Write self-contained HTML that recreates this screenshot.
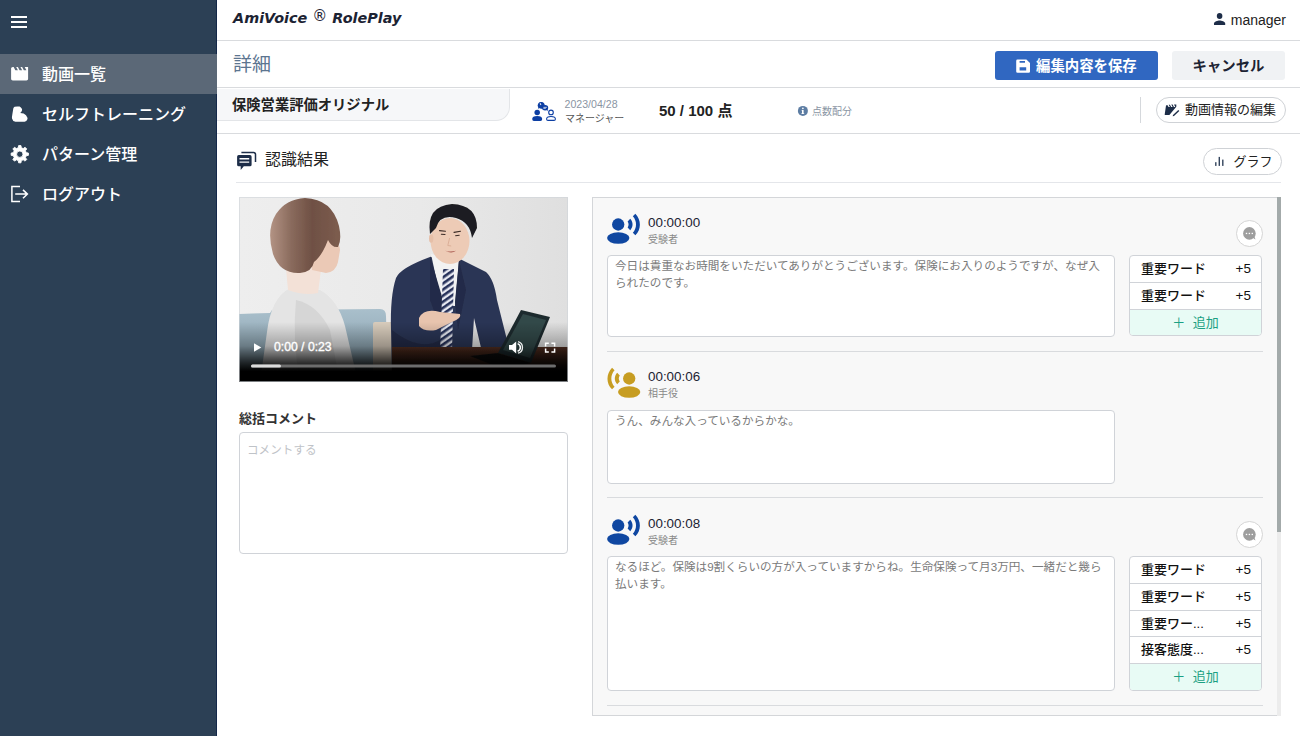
<!DOCTYPE html>
<html lang="ja">
<head>
<meta charset="utf-8">
<title>AmiVoice RolePlay</title>
<style>
*{box-sizing:border-box;margin:0;padding:0}
html,body{width:1300px;height:736px;overflow:hidden;background:#fff}
body{font-family:"Liberation Sans","Noto Sans CJK JP",sans-serif;color:#222;font-size:14px;position:relative}
.abs{position:absolute;z-index:2}
/* sidebar */
#side{position:absolute;left:0;top:0;width:217px;height:736px;background:#2c4055;border-right:1px solid #14284a}
#side .ham{position:absolute;left:11px;top:16px;width:16px;height:12px}
#side .ham i{position:absolute;left:0;width:16px;height:2px;background:#fff}
#side .item{position:absolute;left:0;width:217px;height:40px;color:#fff;font-size:16px;line-height:40px;padding-left:42px;padding-top:1px;white-space:nowrap;font-weight:500}
#side .item.act{background:#5b6877}
#side .item svg.ic{position:absolute;left:0;top:0}
/* top */
#top{position:absolute;left:217px;top:0;width:1083px;height:41px;background:#fff;border-bottom:1px solid #d9dbde;box-shadow:0 1px 2px rgba(0,0,0,.08)}
#logo{position:absolute;left:16px;top:9px;font-family:"DejaVu Sans","Liberation Sans",sans-serif;font-weight:700;font-style:italic;font-size:14.4px;color:#1c2333;white-space:nowrap;letter-spacing:0}
#user{position:absolute;right:14px;top:10px;font-size:14px;color:#222;white-space:nowrap;line-height:20px}
#sub{position:absolute;left:217px;top:41px;width:1083px;height:47px;background:#fff;border-bottom:1px solid #d9dbde}
#sub h1{position:absolute;left:16px;top:9px;font-size:19px;font-weight:400;color:#5c7590;line-height:30px}
.btn{position:absolute;height:29px;border-radius:3px;font-size:14.4px;font-weight:700;line-height:29px;padding-top:1px;text-align:center;white-space:nowrap}
#save{left:778px;top:10px;width:163px;background:#3067c1;color:#fff;text-align:left;padding-left:41px}
#cancel{left:955px;top:10px;width:113px;background:#f0f2f4;color:#1c2333}
#info{position:absolute;left:217px;top:89px;width:1083px;height:45px;background:#fff;border-bottom:1px solid #d9dbde}
#tab{position:absolute;left:0;top:0;width:293px;height:32px;background:#f6f7f9;border:1px solid #e3e5e8;border-left:0;border-top:0;border-radius:0 0 14px 0;font-weight:700;font-size:14.3px;line-height:32px;padding-left:15px;color:#222;white-space:nowrap}

#info .ic1{position:absolute;left:315px;top:11px}
#info .date{position:absolute;left:347.5px;top:9px;font-size:10.6px;line-height:12px;color:#8a95a3;white-space:nowrap}
#info .role{position:absolute;left:348px;top:23px;font-size:10px;line-height:13px;color:#555;white-space:nowrap}
#info .score{position:absolute;left:442px;top:12px;font-size:15px;font-weight:700;line-height:20px;color:#222;white-space:nowrap}
#info .haibun{position:absolute;left:595px;top:16px;font-size:10px;line-height:13px;color:#8a95a3;white-space:nowrap}
#info .vline{position:absolute;left:923px;top:8px;width:1px;height:26px;background:#d5d8dc}
.pill{position:absolute;border:1px solid #cfd2d6;border-radius:14px;background:#fff;font-size:14px;color:#222;white-space:nowrap}
#edit{left:939px;top:8px;width:130px;height:26px;line-height:24px;padding-left:28px;font-size:13px}
#sec{position:absolute;left:217px;top:134px;width:1083px;height:602px;background:#fff}
#sec h2{position:absolute;left:48px;top:14px;font-size:16px;font-weight:400;line-height:24px;color:#222}
#graph{left:986px;top:14px;width:79px;height:27px;line-height:25px;padding-left:29.5px;font-size:13px}
#sec .hr{position:absolute;left:19px;top:48px;width:1045px;height:1px;background:#e4e6ea}
#video{position:absolute;left:22px;top:63px;width:329px;height:185px;overflow:hidden;background:#ddd}
#clabel{position:absolute;left:22px;top:276px;font-size:13px;font-weight:700;line-height:18px;color:#333}
#cbox{position:absolute;left:22px;top:298px;width:329px;height:122px;border:1px solid #d0d3d8;border-radius:4px;background:#fff;padding:8px 7px;font-size:11.6px;line-height:17px;color:#bfc3c8}
#panel{position:absolute;left:375px;top:63px;width:689px;height:519px;background:#f8f8f8;border:1px solid #d4d6d9;overflow:hidden}
#sbt{position:absolute;left:1060px;top:63px;width:4px;height:519px;background:#ececec}
#sbh{position:absolute;left:1060px;top:63px;width:4px;height:335px;background:#a3aaaa}
.ent{position:absolute;left:14px;width:656px}
.ent .spk{position:absolute;left:0;top:0}
.ent .tm{position:absolute;left:41px;top:0;font-size:13.4px;line-height:18px;color:#1c2333}
.ent .who{position:absolute;left:41px;top:19px;font-size:10px;line-height:13px;color:#888}
.ent .ta{position:absolute;left:0;width:508px;border:1px solid #d0d3d8;border-radius:4px;background:#fff;padding:2px 7px;font-size:11.6px;line-height:16.7px;color:#7a7a7a}
.ent .cm{position:absolute;left:629px;width:27px;height:27px;border:1px solid #d5d5d5;border-radius:50%;background:#fff}
.ent .tags{position:absolute;left:522px;width:133px;border:1px solid #d0d3d8;border-radius:4px;background:#fff;overflow:hidden}
.ent .tags div{height:26.8px;line-height:26.8px;border-bottom:1px solid #d0d3d8;font-size:13px;font-weight:500;color:#111;padding-left:11px;position:relative;white-space:nowrap}
.ent .tags div b{position:absolute;right:10px;top:0;font-weight:500;font-size:13.5px}
.ent .tags div.add{background:#e8fbf5;color:#1aa083;text-align:center;padding-left:0;border-bottom:0;height:25.8px;line-height:25.8px;font-weight:400;word-spacing:4px}
.ent .sep{position:absolute;left:0;width:656px;height:1px;background:#d9dbde}
</style>
</head>
<body>
<div id="side">
  <div class="ham"><i style="top:0"></i><i style="top:5px"></i><i style="top:10px"></i></div>
  <div class="item act" style="top:54px"><svg class="ic" width="44" height="40" viewBox="0 54 44 40"><g transform="translate(9.4 63.5) scale(.85)"><path fill="#fff" d="M18 4l2 4h-3l-2-4h-2l2 4h-3l-2-4H8l2 4H7L5 4H4c-1.1 0-1.99.9-1.99 2L2 18c0 1.100.9 2 2 2h16c1.100 0 2-.9 2-2V4h-4z"/></g></svg>動画一覧</div>
  <div class="item" style="top:94px"><svg class="ic" width="44" height="40" viewBox="0 94 44 40"><path fill="#fff" d="M14.600 106.700 Q17 106.200 19.600 106.600 Q22.600 108.400 22 110.600 Q21.400 112.200 20.200 113 Q24.200 113.100 26 115.200 Q28 117.600 27.300 119.600 Q26.600 121.600 24.600 121.800 L15.400 121.800 Q12.600 121.400 12 118.600 Q11.800 116.800 12.400 114 L13.300 108.600 Q13.600 107 14.600 106.700Z"/></svg>セルフトレーニング</div>
  <div class="item" style="top:134px"><svg class="ic" width="44" height="40" viewBox="0 134 44 40"><path fill="#fff" fill-rule="evenodd" stroke="#fff" stroke-width=".9" stroke-linejoin="round" d="M18.26 147.78 L18.64 145.58 L20.96 145.58 L21.34 147.78 L23.25 148.57 L25.08 147.28 L26.72 148.92 L25.43 150.75 L26.22 152.66 L28.42 153.04 L28.42 155.36 L26.22 155.74 L25.43 157.65 L26.72 159.48 L25.08 161.12 L23.25 159.83 L21.34 160.62 L20.96 162.82 L18.64 162.82 L18.26 160.62 L16.35 159.83 L14.52 161.12 L12.88 159.48 L14.17 157.65 L13.38 155.74 L11.18 155.36 L11.18 153.04 L13.38 152.66 L14.17 150.75 L12.88 148.92 L14.52 147.28 L16.35 148.57Z M16.60 154.20 a3.20 3.20 0 1 0 6.40 0 a3.20 3.20 0 1 0 -6.40 0Z"/></svg>パターン管理</div>
  <div class="item" style="top:174px"><svg class="ic" width="44" height="40" viewBox="0 174 44 40"><path fill="none" stroke="#fff" stroke-width="1.5" d="M20 186.600 H11.900 V201.600 H20 M15.200 194.100 H27.200 M23 189.900 L27.400 194.100 L23 198.300"/></svg>ログアウト</div>
</div>
<div id="top">
  <div id="logo">AmiVoice <span style="font-weight:400;font-style:normal;font-size:15px;position:relative;top:-2px">®</span> RolePlay</div>
  <svg class="abs" style="left:994px;top:10px" width="16" height="18" viewBox="1211 10 16 18"><g transform="translate(1211.2 10.1) scale(.7 .74)" fill="#1d2d48"><circle cx="12" cy="8" r="4"/><path d="M12 14c-2.670 0-8 1.340-8 4v2h16v-2c0-2.660-5.330-4-8-4z"/></g></svg><div id="user">manager</div>
</div>
<div id="sub">
  <h1>詳細</h1>
  <svg class="abs" style="left:797px;top:16px" width="18" height="18" viewBox="1014 57 18 18"><path fill="#fff" fill-rule="evenodd" d="M1017.500 59.600 h8.900 l3.600 3.500 v8.400 a1.300 1.300 0 0 1 -1.300 1.300 h-11.200 a1.300 1.300 0 0 1 -1.300 -1.300 v-10.600 a1.300 1.300 0 0 1 1.300 -1.300z M1019.600 60.900 v1.900 h5.400 v-1.900z M1019.600 67.200 v3.300 h6.600 v-3.300z"/></svg><div class="btn" id="save">編集内容を保存</div>
  <div class="btn" id="cancel">キャンセル</div>
</div>
<div id="info">
  <div id="tab">保険営業評価オリジナル</div>
  <svg class="abs" style="left:313px;top:11px" width="28" height="24" viewBox="530 100 28 24"><g fill="#0d3fa3"><circle cx="537.200" cy="112.400" r="2.750"/><path d="M532.200 119 Q532.200 116 537.200 116 Q542.200 116 542.200 119 Q542.200 120.900 540.500 120.900 H533.900 Q532.200 120.900 532.200 119Z"/><path d="M541.400 102 a3.400 3.400 0 1 1 -2.200 6 l-.3 1.600 l-.9 -2.700 a3.400 3.400 0 0 1 3.400 -4.900Z"/><ellipse cx="545.100" cy="107.700" rx="3.100" ry="2.700"/><path d="M546 109.600 l1.700 1.600 l-.1 -2.300Z"/></g><g fill="none" stroke="#0d3fa3" stroke-width="1.100"><circle cx="551" cy="112.400" r="2.300"/><path d="M546.600 119 Q546.600 116.500 551 116.500 Q555.400 116.500 555.400 119 Q555.400 120.400 554 120.400 H548 Q546.600 120.400 546.600 119Z"/></g><g fill="#fff"><rect x="543.400" y="106.900" width="3.400" height=".7"/><rect x="543.400" y="108.200" width="2.400" height=".6"/><path d="M539.600 103.400 l1.200 -.4 l.6 1.700 l-1.100 .5Z" opacity=".8"/></g></svg>
  <div class="date">2023/04/28</div>
  <div class="role">マネージャー</div>
  <div class="score">50 / 100 点</div>
  <svg class="abs" style="left:580px;top:16px" width="12" height="12" viewBox="797 105 12 12"><circle cx="802.900" cy="110.900" r="5" fill="#5d7da3"/><circle cx="802.900" cy="108.300" r=".85" fill="#fff"/><path d="M801.900 109.900 h1.700 v3.300 h.6 v.8 h-2.800 v-.8 h.6 v-2.500 h-.6z" fill="#fff"/></svg><div class="haibun">点数配分</div>
  <div class="vline"></div>
  <svg class="abs" style="left:947px;top:13px" width="18" height="16" viewBox="1164 102 18 16"><g fill="#1d2d48"><path d="M1166 105.600 l1.300 -.5 l1.300 2 h1.300 l-1.200 -2.300 l1.200 -.1 l1.300 2.400 h1.400 l-1.300 -2.500 h1.300 l1.300 2.500 h1.400 l-1.300 -2.500 h2.300 v2.200 l-6.900 8.200 h-4.100 q-.6 0 -.6 -.6z"/><path d="M1178.300 109.900 l1 1 l-5.300 5 l-1.300 .3 l.3 -1.300z"/></g></svg><div class="pill" id="edit">動画情報の編集</div>
</div>
<div id="sec">
  <svg class="abs" style="left:18px;top:15px" width="24" height="24" viewBox="235 149 24 24"><path fill="#1d2d48" fill-rule="evenodd" d="M238.700 155.100 h11.300 a1.600 1.600 0 0 1 1.600 1.600 v8 a1.600 1.600 0 0 1 -1.600 1.600 h-6.200 l-3.100 3.600 v-3.600 h-2 a1.600 1.600 0 0 1 -1.600 -1.600 v-8 a1.600 1.600 0 0 1 1.600 -1.600z M239.500 158 v1.400 h9.700 v-1.400z M239.500 161.400 v1.400 h9.700 v-1.400z"/><path fill="none" stroke="#1d2d48" stroke-width="1.500" d="M241.400 152.600 h12.300 a1.800 1.800 0 0 1 1.800 1.800 v7.700"/></svg><h2>認識結果</h2>
  <svg class="abs" style="left:995px;top:20px" width="14" height="14" viewBox="1212 154 14 14"><g fill="#33445c"><rect x="1215.100" y="162.200" width="1.400" height="3.700"/><rect x="1218.600" y="156.900" width="1.400" height="9"/><rect x="1222.100" y="159.600" width="1.400" height="6.300"/></g></svg><div class="pill" id="graph">グラフ</div>
  <div class="hr"></div>
  <div id="video"><svg width="329" height="185" viewBox="239 197 329 185" style="display:block">
<defs>
<linearGradient id="vbg" x1="0" x2="1" y1="0" y2="0"><stop offset="0" stop-color="#eeeeee"/><stop offset=".55" stop-color="#e9e9e9"/><stop offset="1" stop-color="#dfdfdf"/></linearGradient>
<linearGradient id="vhair" x1="0" x2="1" y1="0" y2="0"><stop offset="0" stop-color="#b39384"/><stop offset=".3" stop-color="#8a6b5d"/><stop offset=".6" stop-color="#6f5044"/><stop offset="1" stop-color="#7d5d4f"/></linearGradient>
<linearGradient id="vsofa" x1="0" x2="0" y1="0" y2="1"><stop offset="0" stop-color="#a9bfcb"/><stop offset="1" stop-color="#7e98a6"/></linearGradient>
<linearGradient id="vtable" x1="0" x2="0" y1="0" y2="1"><stop offset="0" stop-color="#553022"/><stop offset="1" stop-color="#1c0e08"/></linearGradient>
<linearGradient id="vshade" x1="0" x2="0" y1="0" y2="1"><stop offset="0" stop-color="#000" stop-opacity="0"/><stop offset=".4" stop-color="#000" stop-opacity=".28"/><stop offset=".68" stop-color="#000" stop-opacity=".78"/><stop offset=".82" stop-color="#000" stop-opacity="1"/><stop offset="1" stop-color="#000" stop-opacity="1"/></linearGradient>
<pattern id="vtie" width="5" height="5" patternUnits="userSpaceOnUse" patternTransform="rotate(-35)"><rect width="5" height="5" fill="#e8eaf2"/><rect width="5" height="2.6" fill="#27305a"/></pattern>
<filter id="vblur" x="-10%" y="-10%" width="120%" height="120%"><feGaussianBlur stdDeviation="0.7"/></filter>
</defs>
<rect x="239" y="197" width="329" height="185" fill="url(#vbg)"/>
<g filter="url(#vblur)">
<path d="M239 314 L270 313 L272 310 L380 309 Q386 309 386 316 L388 382 L239 382Z" fill="url(#vsofa)"/>
<rect x="373" y="322" width="22" height="50" rx="2" fill="#d8ccbc"/>
<path d="M260 382 L267 332 Q271 298 290 288 L320 290 Q338 300 345 326 L358 382Z" fill="#e4e4e4"/>
<path d="M296 300 Q318 305 330 330 L340 382 L300 382 Q292 340 296 300Z" fill="#d6d6d6"/>
<path d="M286 268 L322 262 L318 293 Q304 296 288 290Z" fill="#f3e1d7"/>
<path d="M312 236 Q338 232 340 250 L338 262 Q336 272 326 273 L312 270Z" fill="#ebc9b6"/>
<path d="M305 198 Q332 199 339 226 Q342 240 338 247 Q332 248 328 240 Q322 256 314 262 Q312 272 300 273 Q280 274 273 254 Q266 230 276 214 Q286 199 305 198Z" fill="url(#vhair)"/>
<path d="M392 382 L391 330 Q390 296 396 278 Q400 268 430 257 L458 258 L486 272 Q494 279 497 300 L508 344 L500 357 L482 352 L474 318 L470 382Z" fill="#2c3554"/>
<path d="M392 330 Q420 352 440 340 L444 382 L392 382Z" fill="#232b46"/>
<path d="M431 254 L459 260 L455 306 L442 306Z" fill="#f2f2f2"/><path d="M430 256 L443 300 L441 330 L430 300Z" fill="#232b48"/><path d="M459 260 L455 302 L458 330 L466 290Z" fill="#232b48"/>
<path d="M443 269 L454 269 L452 352 L440 352Z" fill="url(#vtie)"/>
<ellipse cx="450" cy="241" rx="19.5" ry="23" fill="#edcbb6"/>
<path d="M430 234 Q426 206 452 204 Q477 205 477 228 L472 238 Q470 222 456 218 Q440 214 436 228Z" fill="#1d1c20"/>
<g fill="none" stroke="#3a2a26" stroke-width="1.100" stroke-linecap="round"><path d="M439.500 230.600 l6 .6"/><path d="M454 232.400 l6.500 -1.200"/><path d="M441.400 234.200 l3.600 .300"/><path d="M455.600 235.700 l3.600 -.500"/></g><path d="M445 250.400 q5 2.200 11 .4 q-5 3.400 -11 -.4z" fill="#a8574d"/><path d="M449.600 238 l-1.800 7.500 l3.400 .500" fill="none" stroke="#d9ab94" stroke-width=".9"/><ellipse cx="431.200" cy="238.500" rx="2.200" ry="4.200" fill="#e6bfa8"/>
<path d="M419 318 Q424 308 440 312 L460 314 Q462 318 452 322 L436 330 Q424 332 419 326Z" fill="#e8c4ae"/>
<rect x="392" y="347" width="176" height="35" fill="url(#vtable)"/>
<path d="M521 310 L550 317 L531 363 L498 353Z" fill="#1f2b2d"/>
<path d="M523 314 L546 320 L530 358 L503 350Z" fill="#33484a"/>
<path d="M470 356 L498 353 L531 363 L505 370Z" fill="#111"/>
</g>
<rect x="239" y="322" width="329" height="60" fill="url(#vshade)"/>
<path d="M254 343.3 L261.3 347.5 L254 351.7Z" fill="#fff"/>
<text x="274" y="351.2" font-family="'Liberation Sans',sans-serif" font-size="12.2" font-weight="400" fill="#fff" stroke="#fff" stroke-width=".35">0:00 / 0:23</text>
<path d="M509 345 h3 l4.2 -3.6 v12 l-4.2 -3.6 h-3Z" fill="#fff"/>
<path d="M517.6 343.6 a4 4 0 0 1 0 7.6" fill="none" stroke="#fff" stroke-width="1.5"/>
<path d="M518 341.6 a6 6 0 0 1 0 11.6" fill="none" stroke="#fff" stroke-width="1.3" opacity=".9"/>
<path d="M545.6 346.6 v-3.4 h3.2 M551.4 343.2 h3.2 v3.4 M554.6 348.6 v3.4 h-3.2 M548.8 352 h-3.2 v-3.4" fill="none" stroke="#fff" stroke-width="1.5"/>
<rect x="251" y="364.6" width="305" height="3" rx="1.5" fill="#6d6d6d"/>
<rect x="251" y="364.6" width="30" height="3" rx="1.5" fill="#dcdcdc"/>
<rect x="239.5" y="197.5" width="328" height="184" fill="none" stroke="#cfd3d8" stroke-opacity=".6"/>
</svg></div>
  <div id="clabel">総括コメント</div>
  <div id="cbox">コメントする</div>
  <div id="panel">
    <div class="ent" style="top:16px">
      <svg class="abs" style="left:-3px;top:-4px" width="40" height="38" viewBox="604 210 40 38"><g><g fill="#0f47a1"><circle cx="618.200" cy="224.500" r="6.150"/><ellipse cx="618.250" cy="238.100" rx="11.150" ry="5.750"/><g transform="translate(604.250 210.550) scale(1.550)"><path d="M16.760 5.360l-1.680 1.690c.84 1.180.84 2.710 0 3.890l1.680 1.690c2.020-2.020 2.020-5.070 0-7.270zM20.070 2l-1.630 1.630c2.770 3.020 2.770 7.560 0 10.740L20.070 16c3.900-3.890 3.910-9.950 0-14z"/></g></g></g></svg><div class="tm">00:00:00</div><div class="who">受験者</div>
      <div class="cm" style="top:6px"><svg style="position:absolute;left:5px;top:5px" width="15" height="15" viewBox="0 0 15 15"><circle cx="7.400" cy="7.400" r="6.300" fill="#9e9e9e"/><path d="M9.500 11 l4 2.400 l-1.600 -4.400z" fill="#9e9e9e"/><g fill="#fff"><rect x="3.800" y="6.800" width="1.400" height="1.300"/><rect x="6.700" y="6.800" width="1.400" height="1.300"/><rect x="9.600" y="6.800" width="1.400" height="1.300"/></g></svg></div>
      <div class="ta" style="top:41px;height:82px">今日は貴重なお時間をいただいてありがとうございます。保険にお入りのようですが、なぜ入られたのです。</div>
      <div class="tags" style="top:41px"><div>重要ワード<b>+5</b></div><div>重要ワード<b>+5</b></div><div class="add">＋ 追加</div></div>
      <div class="sep" style="top:137px"></div>
    </div>
    <div class="ent" style="top:170px">
      <svg class="abs" style="left:-3px;top:-4px" width="40" height="38" viewBox="604 210 40 38"><g transform="translate(1247.400 0) scale(-1 1)"><g fill="#c79d22"><circle cx="618.200" cy="224.500" r="6.150"/><ellipse cx="618.250" cy="238.100" rx="11.150" ry="5.750"/><g transform="translate(604.250 210.550) scale(1.550)"><path d="M16.760 5.360l-1.680 1.690c.84 1.180.84 2.710 0 3.890l1.680 1.690c2.020-2.020 2.020-5.070 0-7.270zM20.070 2l-1.630 1.630c2.770 3.020 2.770 7.560 0 10.740L20.070 16c3.900-3.890 3.910-9.950 0-14z"/></g></g></g></svg><div class="tm">00:00:06</div><div class="who">相手役</div>
      <div class="ta" style="top:42px;height:74px">うん、みんな入っているからかな。</div>
      <div class="sep" style="top:129px"></div>
    </div>
    <div class="ent" style="top:317px">
      <svg class="abs" style="left:-3px;top:-4px" width="40" height="38" viewBox="604 210 40 38"><g><g fill="#0f47a1"><circle cx="618.200" cy="224.500" r="6.150"/><ellipse cx="618.250" cy="238.100" rx="11.150" ry="5.750"/><g transform="translate(604.250 210.550) scale(1.550)"><path d="M16.760 5.360l-1.680 1.690c.84 1.180.84 2.710 0 3.890l1.680 1.690c2.020-2.020 2.020-5.070 0-7.270zM20.070 2l-1.630 1.630c2.770 3.020 2.770 7.560 0 10.740L20.070 16c3.900-3.890 3.910-9.950 0-14z"/></g></g></g></svg><div class="tm">00:00:08</div><div class="who">受験者</div>
      <div class="cm" style="top:6px"><svg style="position:absolute;left:5px;top:5px" width="15" height="15" viewBox="0 0 15 15"><circle cx="7.400" cy="7.400" r="6.300" fill="#9e9e9e"/><path d="M9.500 11 l4 2.400 l-1.600 -4.400z" fill="#9e9e9e"/><g fill="#fff"><rect x="3.800" y="6.800" width="1.400" height="1.300"/><rect x="6.700" y="6.800" width="1.400" height="1.300"/><rect x="9.600" y="6.800" width="1.400" height="1.300"/></g></svg></div>
      <div class="ta" style="top:41px;height:135px">なるほど。保険は9割くらいの方が入っていますからね。生命保険って月3万円、一緒だと幾ら払います。</div>
      <div class="tags" style="top:41px"><div>重要ワード<b>+5</b></div><div>重要ワード<b>+5</b></div><div>重要ワー...<b>+5</b></div><div>接客態度...<b>+5</b></div><div class="add">＋ 追加</div></div>
      <div class="sep" style="top:190px"></div>
    </div>
  </div>
  <div id="sbt"></div><div id="sbh"></div>
</div>

</body>
</html>
